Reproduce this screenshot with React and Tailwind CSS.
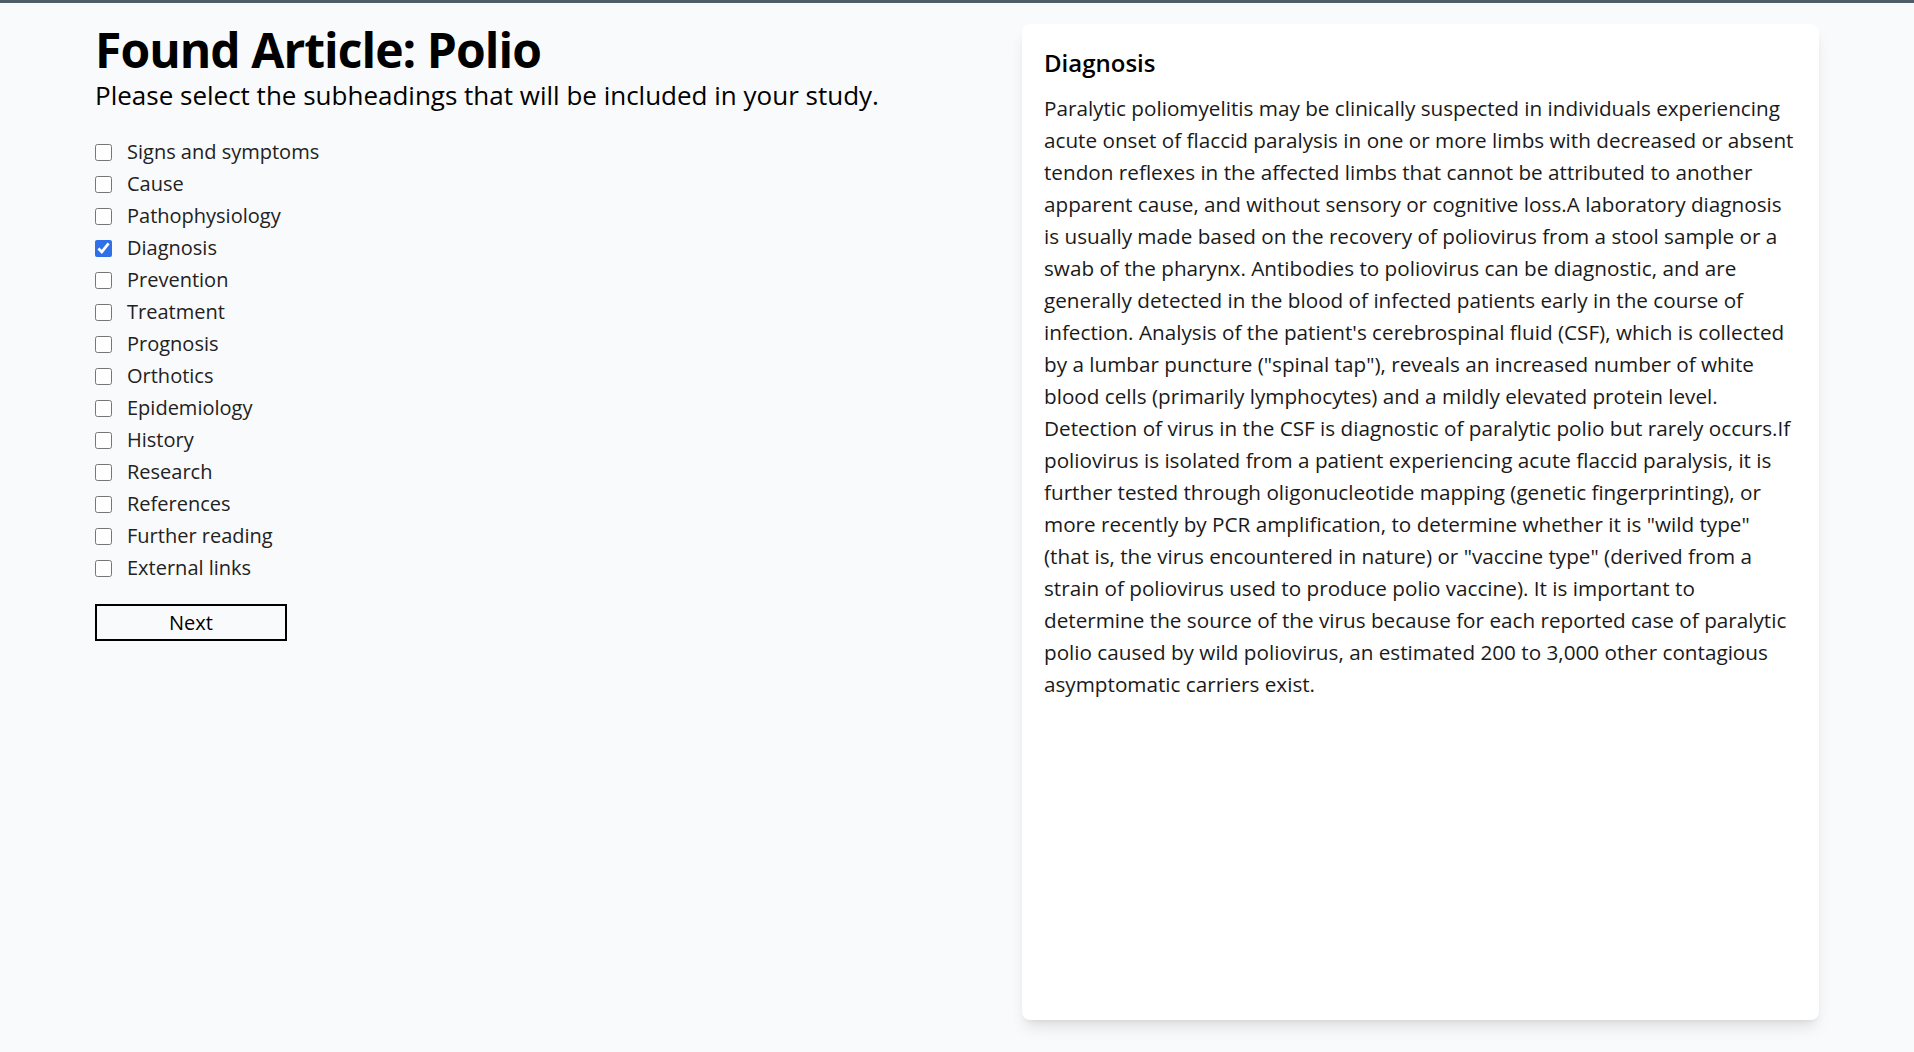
import { useState } from "react";

const sections = [
  "Signs and symptoms", "Cause", "Pathophysiology", "Diagnosis", "Prevention",
  "Treatment", "Prognosis", "Orthotics", "Epidemiology", "History",
  "Research", "References", "Further reading", "External links",
];

const diagnosisText =
  "Paralytic poliomyelitis may be clinically suspected in individuals experiencing acute onset of flaccid paralysis in one or more limbs with decreased or absent tendon reflexes in the affected limbs that cannot be attributed to another apparent cause, and without sensory or cognitive loss.A laboratory diagnosis is usually made based on the recovery of poliovirus from a stool sample or a swab of the pharynx. Antibodies to poliovirus can be diagnostic, and are generally detected in the blood of infected patients early in the course of infection. Analysis of the patient's cerebrospinal fluid (CSF), which is collected by a lumbar puncture (\"spinal tap\"), reveals an increased number of white blood cells (primarily lymphocytes) and a mildly elevated protein level. Detection of virus in the CSF is diagnostic of paralytic polio but rarely occurs.If poliovirus is isolated from a patient experiencing acute flaccid paralysis, it is further tested through oligonucleotide mapping (genetic fingerprinting), or more recently by PCR amplification, to determine whether it is \"wild type\" (that is, the virus encountered in nature) or \"vaccine type\" (derived from a strain of poliovirus used to produce polio vaccine). It is important to determine the source of the virus because for each reported case of paralytic polio caused by wild poliovirus, an estimated 200 to 3,000 other contagious asymptomatic carriers exist.";

export default function App() {
  const [selected, setSelected] = useState(["Diagnosis"]);

  function toggle(name) {
    setSelected(s => s.includes(name) ? s.filter(x => x !== name) : [...s, name]);
  }

  return (
    <div
      className="min-h-screen bg-[#f9fafb] border-t-[3px] border-[#4f5d69] text-[#1a1a1a]"
      style={{ fontFamily: "'Open Sans', 'Noto Sans', sans-serif" }}
    >
      <div className="flex px-[95px] pt-[21px] pb-[32px]">
        {/* Left: subheading picker */}
        <div className="flex-1">
          <h1 className="mt-[2px] text-[48px] leading-[48px] font-bold text-black tracking-[-0.02em]">
            Found Article: Polio
          </h1>
          <p className="mt-[5px] text-[26px] leading-[32px] text-black">
            Please select the subheadings that will be included in your study.
          </p>

          <div className="mt-[25px]">
            {sections.map(name => (
              <label key={name} className="flex items-center h-[32px] cursor-pointer">
                <input
                  type="checkbox"
                  className="w-[17px] h-[17px] m-0 accent-[#2f6fe8]"
                  checked={selected.includes(name)}
                  onChange={() => toggle(name)}
                />
                <span className="ml-[15px] text-[20px] text-[#222]">{name}</span>
              </label>
            ))}
          </div>

          <button className="mt-[20px] w-[192px] h-[37px] border-2 border-black text-[20px] font-medium text-black">
            Next
          </button>
        </div>

        {/* Right: preview */}
        <div className="w-[797px] h-[996px] bg-white rounded-lg shadow-lg px-[22px] pt-[23px]">
          <h2 className="text-[24px] leading-[32px] font-semibold text-black">Diagnosis</h2>
          <p className="mt-[13px] text-[20.7px] leading-[32px] text-[#1a1a1a]">{diagnosisText}</p>
        </div>
      </div>
    </div>
  );
}
